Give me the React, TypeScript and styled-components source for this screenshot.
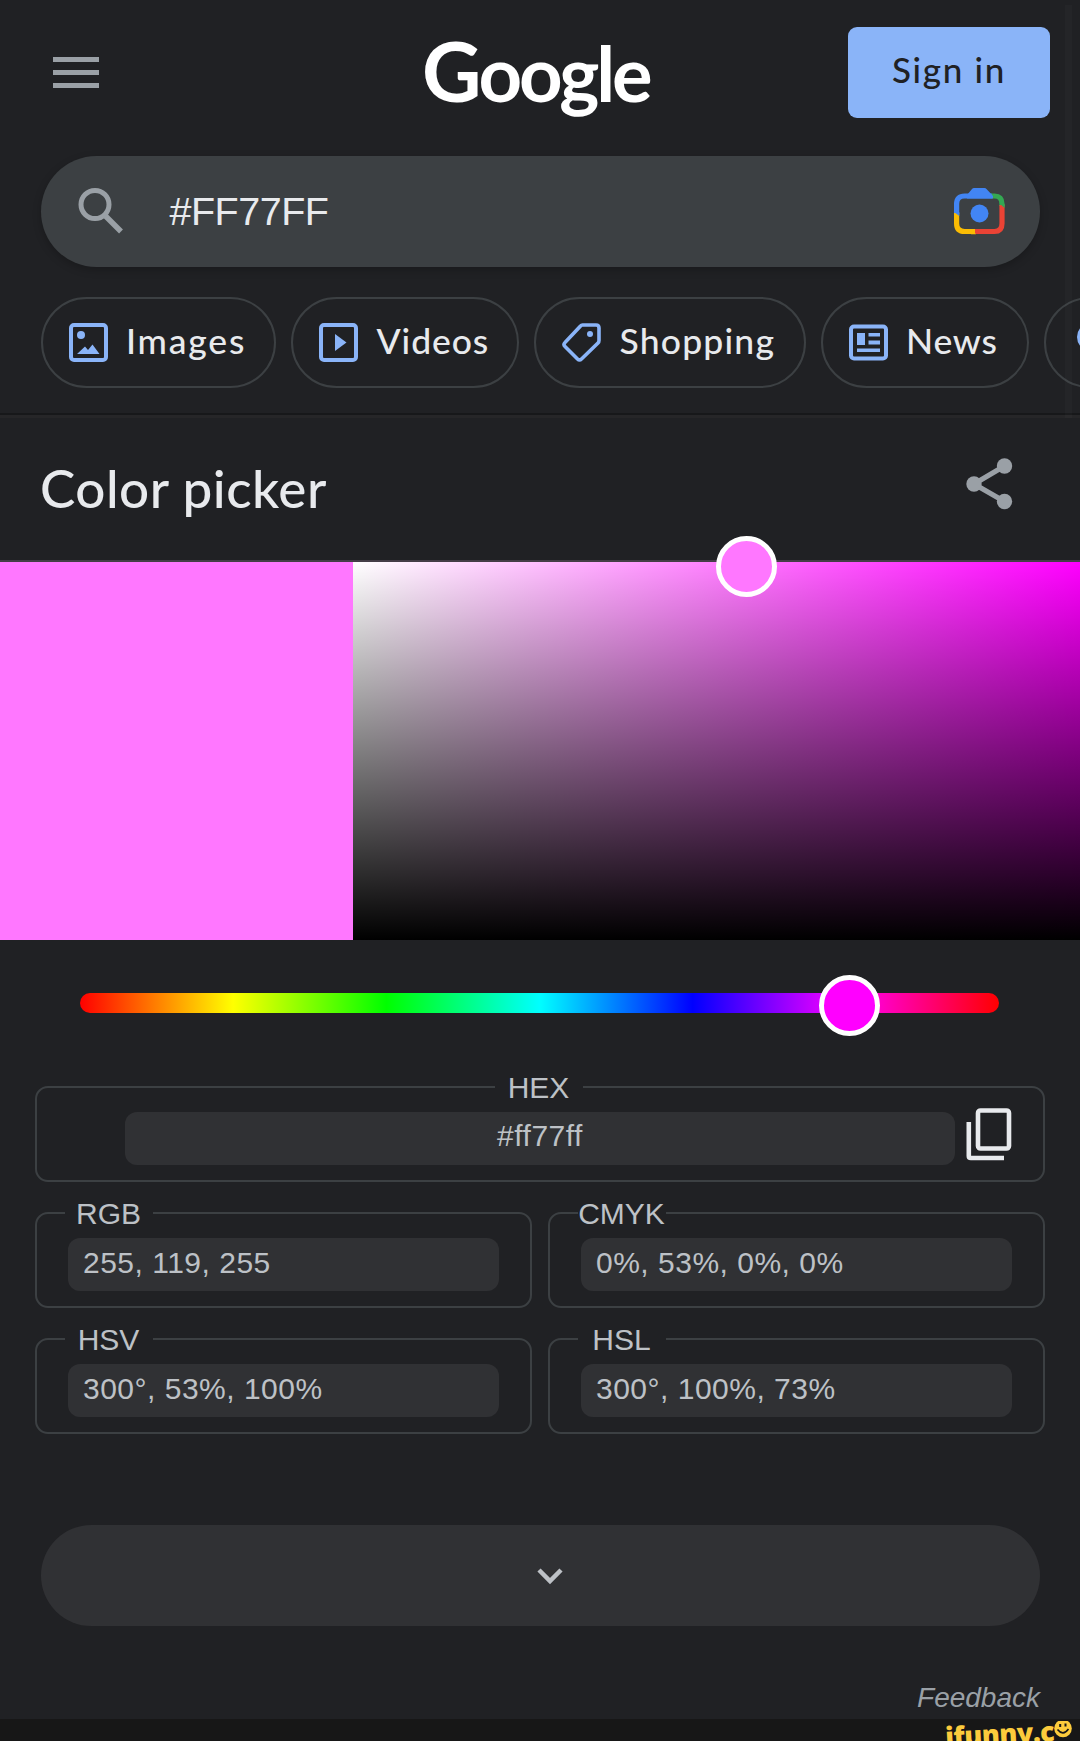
import React from "react";
import styled, { createGlobalStyle } from "styled-components";

const GlobalStyle = createGlobalStyle`
  *, *::before, *::after { box-sizing: border-box; }
  html, body { margin: 0; padding: 0; background: #202124; }
  body { width: 1080px; height: 1741px; overflow: hidden; }
  button, fieldset, legend, h1, h2 { font: inherit; margin: 0; padding: 0; border: 0; background: none; color: inherit; }
`;

const brandFont = `Lato, "Open Sans", sans-serif`;
const textFont = `"Liberation Sans", Arial, sans-serif`;

const Page = styled.div`
  position: relative;
  width: 1080px;
  height: 1741px;
  display: flex;
  flex-direction: column;
  overflow: hidden;
  background: #202124;
  color: #e8eaed;
  font-family: ${textFont};
`;

const Top = styled.header`
  height: 413px;
  flex: none;
`;

const TopBar = styled.div`
  height: 155px;
  display: flex;
  justify-content: space-between;
  align-items: flex-start;
  padding: 27px 30px 0 53px;
`;

const MenuButton = styled.button`
  width: 202px;
  margin-top: 30px;
  display: flex;
  flex-direction: column;
  gap: 7.5px;
`;

const MenuLine = styled.span`
  width: 46px;
  height: 5.3px;
  background: #9aa0a6;
`;

const Logo = styled.div`
  width: 232px;
  margin-left: -27px;
  margin-top: -7px;
  height: 100px;
  line-height: 100px;
  font-family: ${brandFont};
  font-weight: 700;
  font-size: 76px;
  letter-spacing: -3.1px;
  color: #fff;
  white-space: nowrap;

  &::first-letter {
    font-size: 82px;
  }
`;

const SignIn = styled.button`
  width: 202px;
  height: 91px;
  border-radius: 9px;
  background: #8ab4f8;
  color: #202124;
  font-family: ${brandFont};
  font-weight: 500;
  font-size: 35px;
  letter-spacing: 1.7px;
  line-height: 40px;
  padding-bottom: 7px;
`;

const SearchBar = styled.div`
  width: 999px;
  height: 111px;
  margin: 0.5px 0 0 40.5px;
  border-radius: 56px;
  background: #3c4043;
  box-shadow: 0 3px 9px rgba(0, 0, 0, 0.22);
  display: flex;
  align-items: center;
  padding: 0 35px 0 37px;
`;

const Query = styled.div`
  flex: 1;
  margin-left: 46px;
  font-size: 39.5px;
  line-height: 46px;
  letter-spacing: -0.5px;
`;

const Chips = styled.nav`
  display: flex;
  gap: 15px;
  padding: 30px 0 0 40.5px;
`;

const Chip = styled.a<{ $width: number }>`
  flex: none;
  width: ${(p) => p.$width}px;
  height: 91px;
  border: 2px solid #3c4043;
  border-radius: 46px;
  display: flex;
  align-items: center;
  gap: 18.5px;
  padding-left: 26px;
  font-family: ${brandFont};
  font-weight: 500;
  font-size: 35.5px;
  line-height: 40px;
  white-space: nowrap;
`;

const ChipLabel = styled.span<{ $spacing: number }>`
  letter-spacing: ${(p) => p.$spacing}px;
  padding-bottom: 3px;
`;

const Divider = styled.div`
  flex: none;
  height: 5px;
  background: #262628;
  border-top: 2px solid #17181a;
`;

const EdgeLine = styled.div`
  position: absolute;
  top: 5px;
  left: 1065px;
  width: 7px;
  height: 413px;
  background: rgba(255, 255, 255, 0.018);
`;

const TitleRow = styled.div`
  flex: none;
  height: 144px;
  display: flex;
  justify-content: space-between;
  align-items: flex-start;
  padding: 40px 67px 0 40px;
  border-bottom: 2.5px solid #453d48;
`;

const Title = styled.h1`
  margin-top: -1px;
  font-family: ${brandFont};
  font-weight: 500;
  font-size: 53px;
  line-height: 62px;
  letter-spacing: 0.5px;
`;

const Picker = styled.section`
  flex: none;
  height: 378px;
  display: flex;
`;

const Swatch = styled.div`
  width: 353px;
  background: #ff77ff;
`;

const Shade = styled.div`
  position: relative;
  flex: 1;
  background: linear-gradient(to top, #000, rgba(0, 0, 0, 0)), linear-gradient(to right, #fff, #f0f);
`;

const Knob = styled.span<{ $x: number; $y: number; $color: string }>`
  position: absolute;
  left: ${(p) => p.$x}px;
  top: ${(p) => p.$y}px;
  width: 61px;
  height: 61px;
  margin: -30.5px 0 0 -30.5px;
  border: 5px solid #fff;
  border-radius: 50%;
  background: ${(p) => p.$color};
`;

const Hue = styled.div`
  position: relative;
  flex: none;
  width: 919px;
  height: 20px;
  margin: 53px 0 0 80.4px;
  border-radius: 10px;
  background: linear-gradient(to right, #f00, #ff0, #0f0, #0ff, #00f, #f0f, #f00);
`;

const Values = styled.section`
  flex: none;
  display: grid;
  grid-template-columns: 497px 497px;
  column-gap: 16px;
  row-gap: 14px;
  padding: 57px 0 0 35px;
`;

const Field = styled.fieldset<{ $wide?: boolean }>`
  grid-column: ${(p) => (p.$wide ? "1 / -1" : "auto")};
  min-width: 0;
  height: 112px;
  border: 2px solid #3c4043;
  border-radius: 13px;
  padding: ${(p) => (p.$wide ? "8px 30px 0 88px" : "8px 31px 0 31px")};
`;

const Legend = styled.legend<{ $wide?: boolean }>`
  width: 88px;
  height: 34px;
  line-height: 36px;
  margin: ${(p) => (p.$wide ? "0 0 0 370px" : "0 0 0 -3px")};
  font-size: 30px;
  color: #bdc1c6;
`;

const LegendText = styled.span`
  display: flex;
  justify-content: center;
  margin-left: -1px;
  white-space: nowrap;
`;

const FieldBody = styled.div`
  display: flex;
  align-items: flex-start;
  gap: 11px;
`;

const Value = styled.div<{ $center?: boolean }>`
  flex: 1;
  height: 53px;
  border-radius: 12px;
  background: #303134;
  color: #bdc1c6;
  font-size: 30px;
  line-height: ${(p) => (p.$center ? 48 : 50)}px;
  letter-spacing: 0.5px;
  padding-left: ${(p) => (p.$center ? 0 : 15)}px;
  text-align: ${(p) => (p.$center ? "center" : "left")};
`;

const CopyIcon = styled.svg`
  flex: none;
  margin-top: -4px;
`;

const Expand = styled.button`
  flex: none;
  width: 999px;
  height: 101px;
  margin: 91px 0 0 40.5px;
  border-radius: 51px;
  background: #303134;
  display: flex;
  justify-content: center;
  align-items: center;
  padding-left: 20px;
`;

const Feedback = styled.a`
  flex: none;
  height: 93px;
  padding: 54px 40px 0 0;
  text-align: right;
  font-style: italic;
  font-size: 28px;
  line-height: 35px;
  color: #9aa0a6;
`;

const Footer = styled.footer`
  flex: 1;
  display: flex;
  justify-content: flex-end;
  padding-right: 8px;
  background: #171717;
`;

const Watermark = styled.div`
  display: flex;
  height: 22px;
  color: #fccb3c;
  font-family: "Open Sans", sans-serif;
  font-weight: 800;
  font-size: 27px;
  line-height: 23px;
`;

const WatermarkText = styled.span`
  transform: rotate(-3deg);
  transform-origin: right center;
  letter-spacing: -0.5px;
`;

const Smiley = styled.svg`
  flex: none;
  margin-top: 2px;
`;

const blue = "#8ab4f8";

const icons: Record<string, React.ReactNode> = {
  Images: (
    <>
      <rect x="2" y="2" width="35" height="35" rx="3" fill="none" stroke={blue} strokeWidth="4" />
      <circle cx="12" cy="12" r="4" fill={blue} />
      <path d="M8 31 16 23.5 19 27 23.5 21.5 30.500 31Z" fill={blue} />
    </>
  ),
  Videos: (
    <>
      <rect x="2" y="2" width="35" height="35" rx="3" fill="none" stroke={blue} strokeWidth="4" />
      <path d="M16 11V28L27.500 19.500Z" fill={blue} />
    </>
  ),
  Shopping: (
    <>
      <path
        d="M20.500 2H34Q37 2 37 5V17.500Q37 19 36 20L19.500 36Q17.500 38 15.500 36L3 23.500Q1 21.500 3 19.500L18.500 3Q19.300 2 20.500 2Z"
        fill="none"
        stroke={blue}
        strokeWidth="3.600"
      />
      <circle cx="28" cy="11" r="3" fill={blue} />
    </>
  ),
  News: (
    <>
      <rect x="2" y="3.500" width="35" height="32" rx="3" fill="none" stroke={blue} strokeWidth="4" />
      <path d="M8 10H16V22H8ZM19.500 10H31V13.500H19.500ZM19.500 17.500H31V21.500H19.500ZM8 25.500H31V29H8Z" fill={blue} />
    </>
  ),
};

const chips = [
  { label: "Images", width: 235.5, spacing: 1.8 },
  { label: "Videos", width: 228, spacing: 0.9 },
  { label: "Shopping", width: 271.5, spacing: 1.2 },
  { label: "News", width: 208, spacing: 0.8 },
];

const values = [
  { label: "RGB", value: "255, 119, 255" },
  { label: "CMYK", value: "0%, 53%, 0%, 0%" },
  { label: "HSV", value: "300°, 53%, 100%" },
  { label: "HSL", value: "300°, 100%, 73%" },
];

const SearchIcon = () => (
  <svg width="46" height="46" viewBox="0 0 46 46" fill="none" stroke="#9aa0a6">
    <circle cx="17" cy="16.500" r="14" strokeWidth="5" />
    <path d="M27.500 28 43 43.500" strokeWidth="5.500" />
  </svg>
);

const LensIcon = () => (
  <svg width="51" height="47" viewBox="0 0 51 47" fill="none" strokeWidth="5.200">
    <path d="M2.600 26V16Q2.600 8 10.600 8H38" stroke="#4285f4" />
    <path d="M37.500 8H40.500Q48 8 48 16V18" stroke="#34a853" />
    <path d="M48 17V35.500Q48 43.500 40.500 43.500H20" stroke="#ea4335" />
    <path d="M2.600 25V35.500Q2.600 43.500 10.600 43.500H21" stroke="#fbbc04" />
    <path d="M0 24 5.300 28V24Z" fill="#4285f4" />
    <path d="M45.500 15.500 50.600 20V16Z" fill="#34a853" />
    <path d="M18 41 22 46.200H17Z" fill="#fbbc04" />
    <path d="M13 7 18 1Q18.800 0 20 0H30.500Q31.700 0 32.500 1L39 8V10.600H13Z" fill="#4285f4" />
    <circle cx="25.500" cy="25.500" r="9" fill="#4285f4" />
  </svg>
);

const ShareIcon = () => (
  <svg width="47" height="52" viewBox="0 0 47 52" fill="#9aa0a6">
    <path d="M8 26 38.500 8M8 26 38.500 43.500" stroke="#9aa0a6" strokeWidth="5" />
    <circle cx="8" cy="26" r="7.700" />
    <circle cx="38.500" cy="8" r="7.700" />
    <circle cx="38.500" cy="43.500" r="7.700" />
  </svg>
);

export default function App() {
  return (
    <Page>
      <GlobalStyle />
      <Top>
        <TopBar>
          <MenuButton aria-label="Menu">
            <MenuLine />
            <MenuLine />
            <MenuLine />
          </MenuButton>
          <Logo>Google</Logo>
          <SignIn>Sign in</SignIn>
        </TopBar>
        <SearchBar>
          <SearchIcon />
          <Query>#FF77FF</Query>
          <LensIcon />
        </SearchBar>
        <Chips>
          {chips.map((c) => (
            <Chip key={c.label} $width={c.width}>
              <svg width="39" height="39" viewBox="0 0 39 39">{icons[c.label]}</svg>
              <ChipLabel $spacing={c.spacing}>{c.label}</ChipLabel>
            </Chip>
          ))}
          <Chip $width={200}>
            <svg width="39" height="39" viewBox="0 0 39 39">
              <circle cx="19" cy="14" r="12" fill="none" stroke={blue} strokeWidth="4" />
            </svg>
          </Chip>
        </Chips>
      </Top>
      <Divider />
      <EdgeLine />
      <TitleRow>
        <Title>Color picker</Title>
        <ShareIcon />
      </TitleRow>
      <Picker>
        <Swatch />
        <Shade>
          <Knob $x={393} $y={4.5} $color="#ff77ff" />
        </Shade>
      </Picker>
      <Hue>
        <Knob $x={769.5} $y={12.5} $color="#ff00ff" />
      </Hue>
      <Values>
        <Field $wide>
          <Legend $wide>
            <LegendText>HEX</LegendText>
          </Legend>
          <FieldBody>
            <Value $center>#ff77ff</Value>
            <CopyIcon width="47" height="53" viewBox="0 0 47 53" fill="none" stroke="#e8eaed" strokeWidth="4.600">
              <rect x="12" y="2.500" width="31" height="38" rx="2.500" />
              <path d="M2.800 14V48Q2.800 50 4.800 50H38" />
            </CopyIcon>
          </FieldBody>
        </Field>
        {values.map((v) => (
          <Field key={v.label}>
            <Legend>
              <LegendText>{v.label}</LegendText>
            </Legend>
            <FieldBody>
              <Value>{v.value}</Value>
            </FieldBody>
          </Field>
        ))}
      </Values>
      <Expand aria-label="Show more">
        <svg width="26" height="18" viewBox="0 0 26 18" fill="none" stroke="#bdc1c6" strokeWidth="4.500">
          <path d="M2 3 13 14 24 3" />
        </svg>
      </Expand>
      <Feedback>Feedback</Feedback>
      <Footer>
        <Watermark>
          <WatermarkText>ifunny.c</WatermarkText>
          <Smiley width="18" height="18" viewBox="0 0 18 18">
            <circle cx="9" cy="7.500" r="8.800" fill="#fccb3c" />
            <path d="M6.200 3V6M11.500 2.500V5.500" stroke="#171717" strokeWidth="2" />
            <path d="M3.500 8.500Q9 15.500 14.500 8" fill="none" stroke="#171717" strokeWidth="1.600" />
          </Smiley>
        </Watermark>
      </Footer>
    </Page>
  );
}
